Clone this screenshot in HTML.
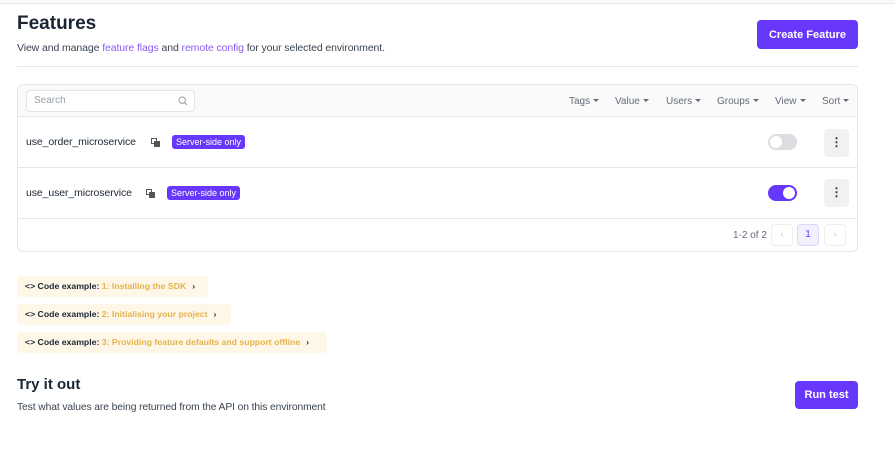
<!DOCTYPE html>
<html><head><meta charset="utf-8"><style>
*{box-sizing:border-box;margin:0;padding:0}
body{width:895px;height:458px;background:#fff;font-family:"Liberation Sans",sans-serif;color:#1a2634;position:relative;overflow:hidden}
.abs{position:absolute}
.top{left:0;top:0;width:895px;height:4px;border-bottom:1px solid #e8e8ec;background:#fafafa}
h1{position:absolute;left:17px;top:13px;font-size:19px;font-weight:bold;color:#1a2634}
.sub{left:17px;top:42px;font-size:10.5px;color:#3a4450;letter-spacing:-0.1px}
.sub a{color:#8d5bf5;text-decoration:none}
.btn{background:#6837fc;color:#fff;font-weight:bold;font-size:11px;border-radius:4px;display:flex;align-items:center;justify-content:center}
.hr{left:17px;top:66px;width:841px;height:1px;background:#e6e6ea}
.tbl{left:17px;top:84px;width:841px;height:168px;border:1px solid #e6e6ea;border-radius:6px;overflow:hidden}
.hd{position:absolute;left:0;top:0;width:100%;height:32px;background:#fafafa;border-bottom:1px solid #e6e6ea}
.search{position:absolute;left:8px;top:5px;width:169px;height:22px;background:#fff;border:1px solid #e4e4e8;border-radius:4px;font-size:10px;color:#9aa0a8;padding:4px 7px}
.f{position:absolute;top:11px;font-size:10px;color:#646c78}
.f:after{content:"";display:inline-block;margin-left:3px;border:3px solid transparent;border-top:3px solid #646c78;vertical-align:-1px}
.row{position:absolute;left:0;width:100%;height:51px;border-bottom:1px solid #e6e6ea}
.nm{position:absolute;left:8px;font-size:10.5px;color:#1a2634;letter-spacing:-0.1px}
.tag{position:absolute;background:#6837fc;color:#fff;font-size:9px;border-radius:3px;padding:1px 4px;height:14px;line-height:12px}
.cp{position:absolute;width:9px;height:9px}
.tg{position:absolute;left:750px;width:29px;height:16px;border-radius:8px}
.tg i{position:absolute;top:2px;width:12px;height:12px;border-radius:50%;background:#fff}
.dots{position:absolute;left:806px;width:25px;height:28px;background:#f0f1f3;border-radius:4px;font-size:12px;color:#333;text-align:center;line-height:27px;font-weight:bold}
.pill{position:absolute;left:17px;height:21px;background:#fef7e8;border-radius:4px;font-size:8.7px;font-weight:bold;padding:5px 8px;color:#1a2634;white-space:nowrap}
.pill span{color:#e5b24b}
.pill b{margin-left:6px}
</style></head><body>
<div class="abs top"></div>
<h1>Features</h1>
<div class="abs sub">View and manage <a>feature flags</a> and <a>remote config</a> for your selected environment.</div>
<div class="abs btn" style="left:757px;top:20px;width:101px;height:29px">Create Feature</div>
<div class="abs hr"></div>
<div class="abs tbl">
 <div class="hd">
  <div class="search">Search
   <svg style="position:absolute;right:6px;top:5px" width="10" height="10" viewBox="0 0 10 10"><circle cx="4.2" cy="4.2" r="3.2" fill="none" stroke="#9aa0a8" stroke-width="1"/><path d="M6.6 6.6L9 9" stroke="#9aa0a8"/></svg></div>
  <span class="f" style="left:551px">Tags</span>
  <span class="f" style="left:597px">Value</span>
  <span class="f" style="left:648px">Users</span>
  <span class="f" style="left:699px">Groups</span>
  <span class="f" style="left:757px">View</span>
  <span class="f" style="left:804px">Sort</span>
 </div>
 <div class="row" style="top:32px">
  <span class="nm" style="top:19px">use_order_microservice</span>
  <svg class="cp" style="left:133px;top:21px" viewBox="0 0 9 9"><rect x="0.5" y="0.5" width="5" height="5" fill="none" stroke="#555"/><rect x="3" y="3" width="6" height="6" fill="#555"/></svg>
  <span class="tag" style="left:154px;top:18px">Server-side only</span>
  <div class="tg" style="top:17px;background:#dcdde0"><i style="left:2px"></i></div>
  <div class="dots" style="top:12px">⋮</div>
 </div>
 <div class="row" style="top:83px">
  <span class="nm" style="top:19px">use_user_microservice</span>
  <svg class="cp" style="left:128px;top:21px" viewBox="0 0 9 9"><rect x="0.5" y="0.5" width="5" height="5" fill="none" stroke="#555"/><rect x="3" y="3" width="6" height="6" fill="#555"/></svg>
  <span class="tag" style="left:149px;top:18px">Server-side only</span>
  <div class="tg" style="top:17px;background:#6837fc"><i style="left:15px"></i></div>
  <div class="dots" style="top:11px">⋮</div>
 </div>
 <span class="abs" style="left:715px;top:145px;font-size:10px;color:#646c78">1-2 of 2</span>
 <div class="abs" style="left:753px;top:139px;width:22px;height:22px;border:1px solid #eee;border-radius:4px;color:#ccc;font-size:10px;text-align:center;line-height:20px">‹</div>
 <div class="abs" style="left:779px;top:139px;width:22px;height:22px;border:1px solid #ddd6fb;background:#f3f0fe;border-radius:4px;color:#6837fc;font-size:10px;text-align:center;line-height:20px">1</div>
 <div class="abs" style="left:806px;top:139px;width:22px;height:22px;border:1px solid #eee;border-radius:4px;color:#ccc;font-size:10px;text-align:center;line-height:20px">›</div>
</div>
<div class="pill" style="top:276px;width:191px">&lt;&gt; Code example: <span>1: Installing the SDK</span><b>›</b></div>
<div class="pill" style="top:304px;width:214px">&lt;&gt; Code example: <span>2: Initialising your project</span><b>›</b></div>
<div class="pill" style="top:332px;width:310px">&lt;&gt; Code example: <span>3: Providing feature defaults and support offline</span><b>›</b></div>
<div class="abs" style="left:17px;top:376px;font-size:15px;font-weight:bold">Try it out</div>
<div class="abs" style="left:17px;top:402px;font-size:10.3px;color:#3a4450;letter-spacing:-0.1px">Test what values are being returned from the API on this environment</div>
<div class="abs btn" style="left:795px;top:381px;width:63px;height:28px">Run test</div>
</body></html>
